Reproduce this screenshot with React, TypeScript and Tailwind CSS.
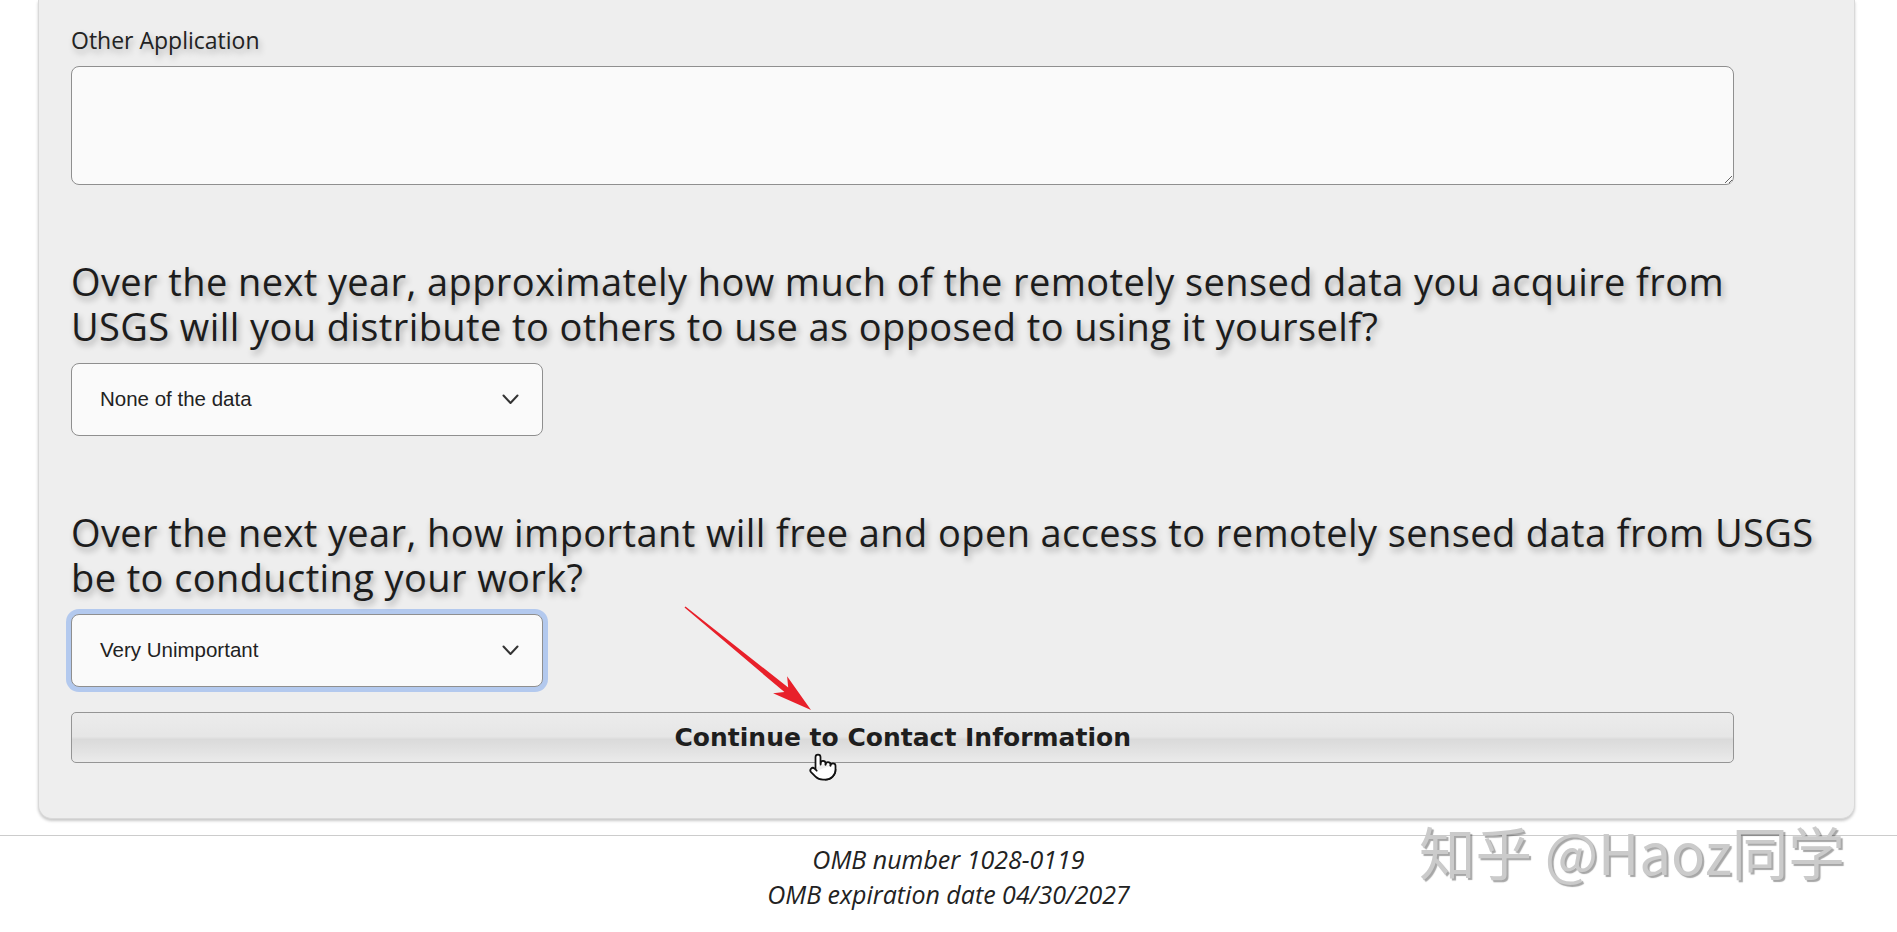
import { Pointer } from "lucide-react";

const headingCls =
  "font-['Open_Sans',sans-serif] text-[38px] leading-[45px] tracking-[0.4px] text-[#1c1c1c] [text-shadow:2px_4px_6px_rgba(0,0,0,0.3)]";

function Dropdown({ value, focused }: { value: string; focused?: boolean }) {
  return (
    <div
      className={`mt-[14px] flex h-[73px] w-[472px] items-center justify-between rounded-[8px] border border-[#8f8f8f] bg-[#fafafa] pl-[28px] pr-[23px] ${
        focused ? "ring-[5px] ring-[#b3c9ee]" : ""
      }`}
    >
      <span className="font-['Liberation_Sans',Arial,sans-serif] text-[20.5px] text-[#222]">
        {value}
      </span>
      <svg width="17" height="11" viewBox="0 0 17 11" fill="none">
        <polyline
          points="1.5,1.5 8.5,9 15.5,1.5"
          stroke="#333"
          strokeWidth="2"
          strokeLinecap="round"
          strokeLinejoin="round"
        />
      </svg>
    </div>
  );
}

export default function App() {
  return (
    <div className="relative h-[932px] overflow-hidden bg-white">
      {/* survey panel, scrolled so its top is out of view */}
      <div className="ml-[38px] mr-[42px] rounded-b-[14px] border-x border-b border-[#d9d9d9] bg-[#eeeeee] px-[32px] pb-[55px] pt-[25px] shadow-[0_2px_3px_rgba(0,0,0,0.22)]">
        <label className="block font-['Open_Sans',sans-serif] text-[23px] leading-[30px] text-[#222] [text-shadow:2px_4px_6px_rgba(0,0,0,0.25)]">
          Other Application
        </label>
        <textarea className="mt-[11px] block h-[119px] w-[95%] rounded-[8px] border border-[#8f8f8f] bg-[#fafafa] outline-none" />

        <h2 className={`mt-[74px] ${headingCls}`}>
          Over the next year, approximately how much of the remotely sensed data you acquire from
          <br />
          USGS will you distribute to others to use as opposed to using it yourself?
        </h2>
        <Dropdown value="None of the data" />

        <h2 className={`mt-[74px] ${headingCls}`}>
          Over the next year, how important will free and open access to remotely sensed data from USGS
          <br />
          be to conducting your work?
        </h2>
        <Dropdown value="Very Unimportant" focused />

        <button className="mt-[25px] block h-[51px] w-[95%] rounded-[5px] border border-[#959595] bg-[linear-gradient(to_bottom,#ececec_0%,#e6e6e6_48%,#dadada_54%,#e3e3e3_80%,#ebebeb_100%)] font-['DejaVu_Sans',Verdana,sans-serif] text-[25px] font-bold text-[#1e1e1e]">
          Continue to Contact Information
        </button>
      </div>

      <footer className="mt-[16px] border-t border-[#cccccc] pt-[6px] text-center font-['Open_Sans',sans-serif] text-[25px] italic leading-[35px] text-[#222]">
        <p>OMB number 1028-0119</p>
        <p>OMB expiration date 04/30/2027</p>
      </footer>

      {/* annotation arrow */}
      <svg className="pointer-events-none absolute left-0 top-0" width="1897" height="932">
        <polygon
          points="685.5,606.4 788.2,687.5 787.1,676.2 811,710 773.1,693.2 784.4,692.1 684.5,607.6"
          fill="#e8202a"
        />
      </svg>

      {/* mouse cursor */}
      <Pointer
        className="pointer-events-none absolute left-[808px] top-[752px]"
        size={30}
        strokeWidth={1.4}
        fill="#fff"
        color="#111"
      />

      {/* watermark */}
      <div className="pointer-events-none absolute left-[1419px] top-[816px] font-['Noto_Sans_CJK_SC',sans-serif] text-[56.5px] leading-[68px] text-[#cbcbcb] [text-shadow:2px_2px_1px_rgba(0,0,0,0.35)]">
        知乎 @Haoz同学
      </div>
    </div>
  );
}
